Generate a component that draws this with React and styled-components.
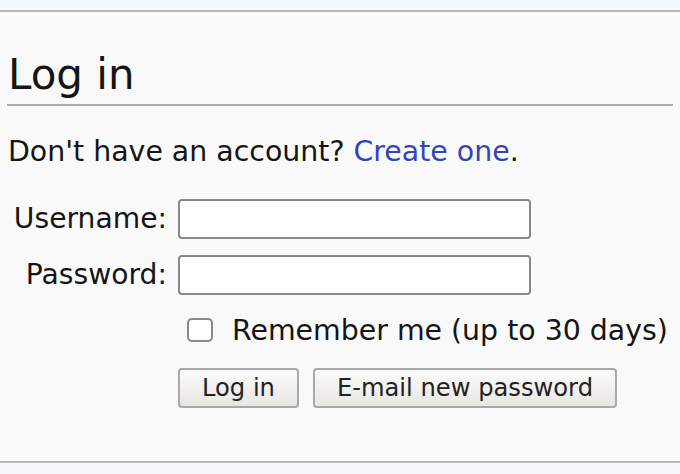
import React from "react";
import styled, { createGlobalStyle } from "styled-components";

const GlobalStyle = createGlobalStyle`
  html, body {
    margin: 0;
    padding: 0;
    background: #f6f9fc;
    font-family: "DejaVu Sans", "Liberation Sans", sans-serif;
    color: #151515;
  }
`;

const Page = styled.div`
  padding-top: 10px;
`;

const Panel = styled.div`
  background: #f9f9f9;
  border-top: 2px solid #b8b8b8;
  border-bottom: 2px solid #b8b8b8;
  padding: 0 7px;
  height: 453px;
  box-sizing: border-box;
`;

const Heading = styled.h1`
  margin: 0;
  padding: 38px 0 4px 1px;
  font-size: 42px;
  font-weight: normal;
  line-height: 50px;
  border-bottom: 2px solid #aaa;
`;

const Intro = styled.p`
  margin: 26px 0 0 1px;
  font-size: 28.4px;
  line-height: 40px;
`;

const Link = styled.a`
  color: #3344bb;
  text-decoration: none;
`;

const Form = styled.form`
  display: grid;
  grid-template-columns: 160px auto;
  grid-auto-rows: 40px;
  column-gap: 11px;
  row-gap: 16px;
  margin-top: 27px;
  align-items: center;
`;

const Label = styled.label`
  text-align: right;
  font-size: 28.2px;
  line-height: 36px;
`;

const Input = styled.input`
  width: 353px;
  height: 40px;
  box-sizing: border-box;
  border: 2px solid #888;
  border-radius: 4px;
  background: #fff;
  margin: 0;
`;

const Check = styled.div`
  grid-column: 2;
  display: flex;
  align-items: center;
  gap: 19px;
  padding-left: 9px;
  font-size: 28.4px;
  margin-top: -2px;
`;

const Box = styled.span`
  width: 26px;
  height: 24px;
  box-sizing: border-box;
  border: 2px solid #888;
  border-radius: 5px;
  background: #fff;
`;

const Buttons = styled.div`
  grid-column: 2;
  display: flex;
  gap: 14px;
  margin-top: 2px;
`;

const Button = styled.button`
  height: 40px;
  padding: 0 22px;
  font-family: inherit;
  font-size: 24.2px;
  color: #222;
  border: 2px solid #a8a8a8;
  border-radius: 4px;
  background: linear-gradient(#fbfbfb, #e8e6e2);
  margin: 0;
`;

export default function App() {
  return (
    <Page>
      <GlobalStyle />
      <Panel>
        <Heading>Log in</Heading>
        <Intro>
          Don't have an account? <Link href="#">Create one</Link>.
        </Intro>
        <Form>
          <Label>Username:</Label>
          <Input type="text" />
          <Label>Password:</Label>
          <Input type="password" />
          <Check>
            <Box />
            <span>Remember me (up to 30 days)</span>
          </Check>
          <Buttons>
            <Button>Log in</Button>
            <Button>E-mail new password</Button>
          </Buttons>
        </Form>
      </Panel>
    </Page>
  );
}
